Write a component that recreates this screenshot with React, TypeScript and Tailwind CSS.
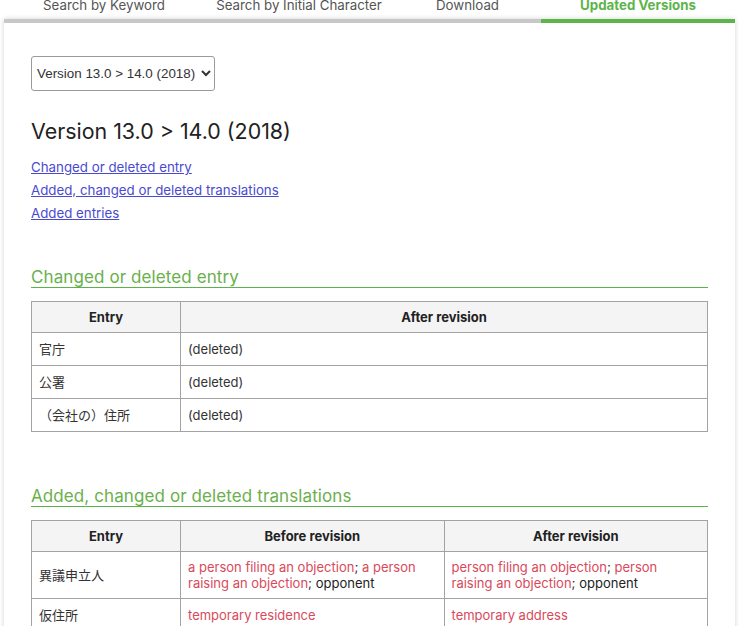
// Updated Versions page — dictionary revision tables

import React from "react";

// ─── Data ───────────────────────────────────────────────────────────────────

interface Tab {
  label: string;
  width: string;
  active?: boolean;
}

const TABS: Tab[] = [
  { label: "Search by Keyword", width: "w-[200px]" },
  { label: "Search by Initial Character", width: "w-[190px]" },
  { label: "Download", width: "w-[147px]" },
  { label: "Updated Versions", width: "flex-1", active: true },
];

// a translation cell is a list of terms; red ones were changed
type Term = { text: string; changed?: boolean };

const DELETED = ["官庁", "公署", "（会社の）住所"];

const TRANSLATIONS: { entry: string; before: Term[]; after: Term[] }[] = [
  {
    entry: "異議申立人",
    before: [
      { text: "a person filing an objection", changed: true },
      { text: "a person raising an objection", changed: true },
      { text: "opponent" },
    ],
    after: [
      { text: "person filing an objection", changed: true },
      { text: "person raising an objection", changed: true },
      { text: "opponent" },
    ],
  },
  {
    entry: "仮住所",
    before: [{ text: "temporary residence", changed: true }],
    after: [{ text: "temporary address", changed: true }],
  },
];

const CJK = "font-['Inter','Noto_Sans_CJK_JP',sans-serif]";

// ─── Pieces ─────────────────────────────────────────────────────────────────

const Terms: React.FC<{ terms: Term[] }> = ({ terms }) => (
  <>
    {terms.map((t, i) => (
      <React.Fragment key={i}>
        {i > 0 && "; "}
        <span className={t.changed ? "text-[#d94a5a]" : "text-[#222]"}>{t.text}</span>
      </React.Fragment>
    ))}
  </>
);

const SectionTitle: React.FC<{ children: React.ReactNode }> = ({ children }) => (
  <h2 className="text-[17px] leading-5 text-[#6ab04c] border-b border-[#5ab348] tracking-[0.1px]">
    {children}
  </h2>
);

const th = "border border-[#a3a3a3] bg-[#f4f4f4] py-[7px] px-[7px] text-[13px] leading-4 font-bold text-[#222] text-center";
const td = "border border-[#a3a3a3] py-[7px] px-[7px] text-[13px] leading-4 text-[#333] align-middle";

// ─── Page ───────────────────────────────────────────────────────────────────

export default function App() {
  return (
    <div className={`min-h-[626px] bg-white ${CJK}`}>
      {/* Tabs */}
      <div className="mx-1 flex h-[19px] items-end">
        {TABS.map((t) => (
          <div
            key={t.label}
            className={`${t.width} pb-[7px] text-center text-[13.3px] leading-[14px] ${
              t.active ? "font-bold text-[#5db44b]" : "text-[#555]"
            }`}
          >
            {t.label}
          </div>
        ))}
      </div>

      <div className="mx-1 bg-white shadow-[0_0_5px_rgba(0,0,0,0.18)] pb-10">
        <div className="flex h-1">
          {TABS.map((t) => (
            <div key={t.label} className={`${t.width} ${t.active ? "bg-[#5bb54a]" : "bg-[#c8c8c8]"}`} />
          ))}
        </div>

        <div className="px-[27px] pt-[33px]">
          <select className="h-[35px] w-[184px] rounded-[3px] border border-[#9a9a9a] bg-white px-[1px] font-['Liberation_Sans',Arial,sans-serif] text-[13.4px] text-[#333]">
            <option>Version 13.0 &gt; 14.0 (2018)</option>
          </select>

          <h1 className="mt-[26px] text-[21.4px] leading-7 text-[#222]">Version 13.0 &gt; 14.0 (2018)</h1>

          <nav className="mt-[11px] flex flex-col items-start text-[13.3px] leading-[23px] text-[#4a4ad0]">
            <a href="#changed" className="underline">Changed or deleted entry</a>
            <a href="#translations" className="underline">Added, changed or deleted translations</a>
            <a href="#added" className="underline">Added entries</a>
          </nav>

          {/* Changed or deleted entry */}
          <section id="changed" className="mt-[42px]">
            <SectionTitle>Changed or deleted entry</SectionTitle>
            <table className="mt-[13px] w-full table-fixed border-collapse">
              <colgroup>
                <col className="w-[149px]" />
                <col />
              </colgroup>
              <thead>
                <tr>
                  <th className={th}>Entry</th>
                  <th className={th}>After revision</th>
                </tr>
              </thead>
              <tbody>
                {DELETED.map((e) => (
                  <tr key={e}>
                    <td className={`${td} leading-[18px] text-[#222]`}>{e}</td>
                    <td className={td}>(deleted)</td>
                  </tr>
                ))}
              </tbody>
            </table>
          </section>

          {/* Added, changed or deleted translations */}
          <section id="translations" className="mt-[54px]">
            <SectionTitle>Added, changed or deleted translations</SectionTitle>
            <table className="mt-[13px] w-full table-fixed border-collapse">
              <colgroup>
                <col className="w-[149px]" />
                <col />
                <col />
              </colgroup>
              <thead>
                <tr>
                  <th className={`${th} py-[5px]`}>Entry</th>
                  <th className={`${th} py-[5px]`}>Before revision</th>
                  <th className={`${th} py-[5px]`}>After revision</th>
                </tr>
              </thead>
              <tbody>
                {TRANSLATIONS.map((r) => (
                  <tr key={r.entry}>
                    <td className={`${td} leading-[18px] text-[#222]`}>{r.entry}</td>
                    <td className={td}><Terms terms={r.before} /></td>
                    <td className={td}><Terms terms={r.after} /></td>
                  </tr>
                ))}
              </tbody>
            </table>
          </section>
        </div>
      </div>
    </div>
  );
}
